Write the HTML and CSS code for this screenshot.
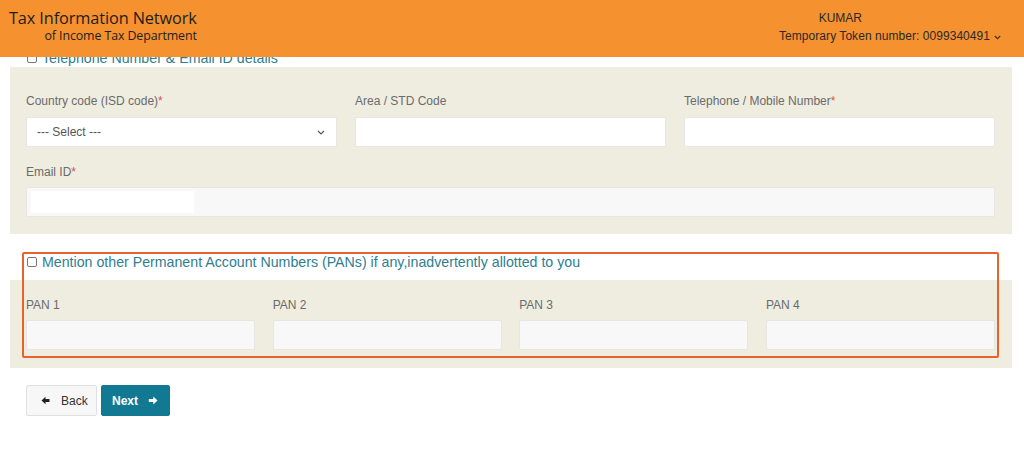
FILE: index.html
```html
<!DOCTYPE html>
<html lang="en">
<head>
<meta charset="utf-8">
<title>Tax Information Network</title>
<link rel="stylesheet" href="styles.css">
</head>
<body>
<header class="topbar">
  <div class="brand">
    <div class="brand-title">Tax Information Network</div>
    <div class="brand-sub">of Income Tax Department</div>
  </div>
  <div class="user">
    <div class="user-name">KUMAR</div>
    <div class="user-token">Temporary Token number: 0099340491
      <svg class="caret" width="7" height="5" viewBox="0 0 7 5"><path d="M0.8 1 L3.5 3.7 L6.2 1" fill="none" stroke="#333" stroke-width="1.1"/></svg>
    </div>
  </div>
</header>

<main class="content">
  <div class="section-head section-head-top">
    <span class="box"></span><span>Telephone Number &amp; Email ID details</span>
  </div>
  <section class="panel panel-contact">
    <div class="grid grid-3">
      <div class="field">
        <label class="lbl">Country code (ISD code)<span class="req">*</span></label>
        <div class="ctrl ctrl-select">
          <span>--- Select ---</span>
          <svg width="8" height="5" viewBox="0 0 8 5"><path d="M1 1 L4 4 L7 1" fill="none" stroke="#555" stroke-width="1.1"/></svg>
        </div>
      </div>
      <div class="field">
        <label class="lbl">Area / STD Code</label>
        <input class="ctrl" type="text">
      </div>
      <div class="field">
        <label class="lbl">Telephone / Mobile Number<span class="req">*</span></label>
        <input class="ctrl" type="text">
      </div>
    </div>
    <div class="field field-email">
      <label class="lbl">Email ID<span class="req">*</span></label>
      <div class="ctrl ctrl-email"><span class="redact"></span></div>
    </div>
  </section>

  <div class="pan-wrap">
    <div class="section-head section-head-pan">
      <span class="box"></span><span>Mention other Permanent Account Numbers (PANs) if any,inadvertently allotted to you</span>
    </div>
    <section class="panel panel-pan">
      <div class="grid grid-4">
        <div class="field"><label class="lbl">PAN 1</label><input class="ctrl ctrl-grey" type="text"></div>
        <div class="field"><label class="lbl">PAN 2</label><input class="ctrl ctrl-grey" type="text"></div>
        <div class="field"><label class="lbl">PAN 3</label><input class="ctrl ctrl-grey" type="text"></div>
        <div class="field"><label class="lbl">PAN 4</label><input class="ctrl ctrl-grey" type="text"></div>
      </div>
    </section>
    <div class="highlight"></div>
  </div>

  <div class="actions">
    <button class="btn btn-back" type="button">
      <svg width="9" height="9" viewBox="0 0 9 9"><path d="M0.5 4.5 L4.5 0.8 L4.5 3 L8.5 3 L8.5 6 L4.5 6 L4.5 8.2 Z" fill="#222"/></svg>
      <span>Back</span>
    </button>
    <button class="btn btn-next" type="button">
      <span>Next</span>
      <svg width="10" height="9" viewBox="0 0 10 9"><path d="M9.5 4.5 L5.3 0.6 L5.3 3 L0.8 3 L0.8 6 L5.3 6 L5.3 8.4 Z" fill="#fff"/></svg>
    </button>
  </div>
</main>
</body>
</html>
```

FILE: styles.css
```css
* { box-sizing: border-box; }

html, body {
  margin: 0;
  padding: 0;
  background: #ffffff;
  font-family: "Liberation Sans", Arial, sans-serif;
  color: #333;
}

.topbar {
  position: fixed;
  top: 0;
  left: 0;
  right: 0;
  height: 57px;
  background: #f5912f;
  display: flex;
  justify-content: space-between;
  align-items: flex-start;
  z-index: 10;
}

.brand {
  padding: 8px 0 0 9px;
  font-family: "Open Sans", "Noto Sans", sans-serif;
  color: #1e1e1e;
  display: flex;
  flex-direction: column;
  align-items: flex-end;
}

.brand-title {
  font-size: 16.3px;
  line-height: 20px;
  letter-spacing: -0.1px;
}

.brand-sub {
  font-size: 12.4px;
  line-height: 16px;
  letter-spacing: -0.1px;
}

.user {
  padding: 11px 23px 0 0;
  display: flex;
  flex-direction: column;
  align-items: flex-end;
  font-size: 12px;
  color: #2a2a2a;
}

.user-name {
  line-height: 15px;
  margin-right: 139px;
}

.user-token {
  line-height: 15px;
  margin-top: 3px;
  display: flex;
  align-items: center;
  gap: 4px;
  letter-spacing: 0.05px;
}

.caret { margin-top: 2px; }

.content {
  padding: 48px 12px 30px 10px;
}

.section-head {
  display: flex;
  align-items: center;
  color: #2f7e8f;
  font-size: 14.2px;
  line-height: 20px;
  padding-left: 17px;
}

.box {
  width: 10px;
  height: 10px;
  border: 1px solid #777;
  border-radius: 2px;
  background: #fff;
  margin-right: 5px;
  flex-shrink: 0;
}

.section-head-top { margin-bottom: -1px; }

.panel {
  background: #efede0;
  padding-left: 16px;
  padding-right: 17px;
}

.panel-contact {
  padding-top: 26px;
  padding-bottom: 17px;
}

.grid {
  display: grid;
  column-gap: 18px;
}

.grid-3 { grid-template-columns: repeat(3, 1fr); }
.grid-4 { grid-template-columns: repeat(4, 1fr); column-gap: 17.5px; }

.field {
  display: flex;
  flex-direction: column;
}

.field-email { margin-top: 17px; }

.lbl {
  font-size: 12px;
  line-height: 17px;
  color: #6b6b6b;
  margin-bottom: 7px;
}

.field-email .lbl { margin-bottom: 6px; }

.req { color: #d9534f; }

.ctrl {
  height: 30px;
  border: 1px solid #e6e6e2;
  border-radius: 2px;
  background: #ffffff;
  font-family: inherit;
  font-size: 12px;
  padding: 0 10px;
  outline: none;
  width: 100%;
  margin: 0;
}

.ctrl-select {
  display: flex;
  align-items: center;
  justify-content: space-between;
  color: #555;
  padding-right: 11px;
}

.ctrl-email {
  background: #f8f8f9;
  padding: 3px 4px;
  display: flex;
}

.redact {
  display: block;
  width: 163px;
  height: 22px;
  background: #ffffff;
}

.ctrl-grey { background: #f8f8f8; }

.pan-wrap {
  position: relative;
  margin-top: 18px;
}

.section-head-pan {
  height: 28px;
  align-items: flex-start;
}

.section-head-pan .box { margin-top: 5px; }

.panel-pan {
  padding-top: 17px;
  padding-bottom: 18px;
}

.panel-pan .lbl { margin-bottom: 6px; }

.highlight {
  position: absolute;
  left: 12px;
  top: 0;
  width: 977px;
  height: 106px;
  border: 2.5px solid #e9622a;
  border-radius: 2px;
  pointer-events: none;
}

.actions {
  display: flex;
  gap: 4px;
  padding-left: 16px;
  margin-top: 17px;
}

.btn {
  height: 31px;
  border-radius: 2px;
  font-family: inherit;
  font-size: 12px;
  display: flex;
  align-items: center;
  cursor: pointer;
  margin: 0;
}

.btn-back {
  width: 71px;
  background: #f7f7f7;
  border: 1px solid #e0e0e0;
  color: #333;
  padding: 0 0 0 14px;
  gap: 11px;
}

.btn-next {
  width: 69px;
  background: #127993;
  border: 1px solid #127993;
  color: #ffffff;
  font-weight: bold;
  padding: 0 0 0 10px;
  gap: 10px;
}
```
